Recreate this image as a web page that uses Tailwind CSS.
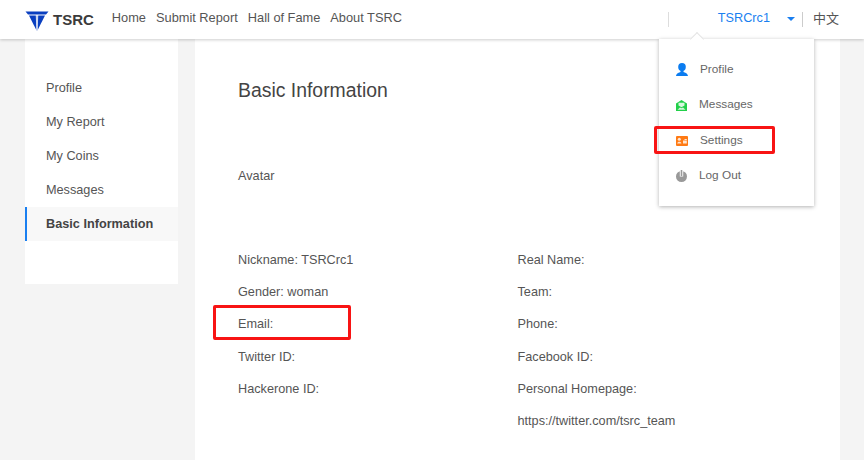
<!DOCTYPE html>
<html lang="en">
<head>
  <meta charset="UTF-8" />
  <title>TSRC</title>
  <script src="https://cdn.jsdelivr.net/npm/@tailwindcss/browser@4"></script>
</head>
<body class="relative h-[460px] w-[864px] overflow-hidden bg-[#f4f4f4] font-['Liberation_Sans','Noto_Sans_CJK_SC',sans-serif] text-[12.7px] text-[#555]">
  <!-- Header -->
  <header class="relative z-10 flex h-[39px] bg-white pl-[25px] pr-[25px] shadow-[0_1px_3px_rgba(0,0,0,0.2)]">
    <div class="flex items-center pt-[2px]">
      <svg width="24" height="20" viewBox="0 0 24 20">
        <path d="M0.5 0.5H23.5L21 3.5H3Z" fill="#0a3fc0" />
        <path d="M4 4.5H10.8L11.3 19Z" fill="#0a3fc0" />
        <path d="M20 4.5H13.2L12.7 19Z" fill="#0a3fc0" />
        <path d="M11.5 4.5H12.5L12.3 20H11.7Z" fill="#8fa6e0" />
      </svg>
      <span class="ml-[4px] text-[15px] font-bold text-[#3b3b3b]">TSRC</span>
    </div>
    <nav class="ml-[18px] flex gap-[10px] pt-[10px] text-[12.8px] leading-[15px] text-[#555]">
      <a href="#">Home</a>
      <a href="#">Submit Report</a>
      <a href="#">Hall of Fame</a>
      <a href="#">About TSRC</a>
    </nav>
    <div class="ml-auto flex items-center self-start pt-[10px] leading-[15px]">
      <span class="mt-[2px] h-[15px] w-px bg-[#ddd]"></span>
      <span class="ml-[49px] text-[#1a7ff0]">TSRCrc1</span>
      <span class="ml-[17px] h-0 w-0 border-x-[4px] border-t-[4px] border-x-transparent border-t-[#1a7ff0]"></span>
      <span class="ml-[7px] mt-[2px] h-[15px] w-px bg-[#ccc]"></span>
      <span class="ml-[10px] mt-[-1px] text-[13px]">中文</span>
    </div>
  </header>

  <div class="flex items-start gap-[17px] pl-[25px] pr-[24px]">
    <!-- Sidebar -->
    <aside class="flex h-[245px] w-[153px] flex-col bg-white pt-[32px]">
      <a href="#" class="flex h-[34px] items-center pl-[21px] pt-[2px]">Profile</a>
      <a href="#" class="flex h-[34px] items-center pl-[21px] pt-[2px]">My Report</a>
      <a href="#" class="flex h-[34px] items-center pl-[21px] pt-[2px]">My Coins</a>
      <a href="#" class="flex h-[34px] items-center pl-[21px] pt-[2px]">Messages</a>
      <a href="#" class="flex h-[34px] items-center border-l-2 border-[#1a7ff0] bg-[#f8f8f8] pl-[19px] pt-[2px] font-bold text-[#444]">Basic Information</a>
    </aside>

    <!-- Main -->
    <main class="h-[421px] w-[645px] bg-white pl-[43px] pt-[39px]">
      <h1 class="text-[19.4px] leading-[24px] text-[#444]">Basic Information</h1>
      <p class="mt-[66px] leading-[16px]">Avatar</p>
      <div class="mt-[60px] grid grid-cols-[279.5px_1fr] auto-rows-[32.3px] items-center">
        <p>Nickname: TSRCrc1</p>
        <p>Real Name:</p>
        <p>Gender: woman</p>
        <p>Team:</p>
        <p>Email:</p>
        <p>Phone:</p>
        <p>Twitter ID:</p>
        <p>Facebook ID:</p>
        <p>Hackerone ID:</p>
        <p>Personal Homepage:</p>
        <p></p>
        <p>https://twitter.com/tsrc_team</p>
      </div>
    </main>
  </div>

  <!-- User menu -->
  <div class="absolute left-[659px] top-[39px] z-20 h-[167px] w-[155px] bg-white pt-[13px] shadow-[0_1px_4px_rgba(0,0,0,0.3)]">
    <span class="absolute left-[33px] top-[-5px] h-[10px] w-[10px] rotate-45 border-l border-t border-[#e4e4e4] bg-white"></span>
    <a href="#" class="relative flex h-[35.5px] items-center pl-[17px] pt-[1px] text-[11.8px] text-[#666]">
      <svg width="12" height="13" viewBox="0 0 12 13" class="mt-[-2px]"><ellipse cx="6" cy="4" rx="3.8" ry="4" fill="#0b7cf0" /><path d="M4.5 7H7.5V9C9 9.7 11.5 10 12 13H0C0.5 10 3 9.7 4.5 9Z" fill="#0b7cf0" /></svg>
      <span class="ml-[12px]">Profile</span>
    </a>
    <a href="#" class="flex h-[35.5px] items-center pl-[17px] text-[11.8px] text-[#666]">
      <svg width="11" height="11" viewBox="0 0 11 11"><path d="M0 3.5L5.5 0L11 3.5V11H0Z" fill="#22d04a" /><path d="M2.5 2.8H8.5V5.5L5.5 7.2L2.5 5.5Z" fill="#d8f7df" /><path d="M1.5 9.8L4 7.5L5.5 8.2L7 7.5L9.5 9.8Z" fill="#d8f7df" /></svg>
      <span class="ml-[12px]">Messages</span>
    </a>
    <a href="#" class="flex h-[35.5px] items-center pl-[17px] pt-[1px] text-[11.8px] text-[#666]">
      <svg width="12" height="10" viewBox="0 0 12 10"><rect width="12" height="10" rx="1" fill="#ff7a14" /><circle cx="3.3" cy="3.3" r="1.5" fill="#ffe6d2" /><path d="M1.2 7.5C1.4 5.3 5.2 5.3 5.4 7.5Z" fill="#ffe6d2" /><rect x="7" y="4.5" width="3.8" height="3" fill="#ffe6d2" /><rect x="8.5" y="3" width="2.3" height="1" fill="#ffe6d2" /></svg>
      <span class="ml-[12px]">Settings</span>
    </a>
    <a href="#" class="flex h-[35.5px] items-center pl-[17px] text-[11.8px] text-[#666]">
      <svg width="11" height="12" viewBox="0 0 11 12"><circle cx="5.5" cy="6.5" r="5.5" fill="#999" /><rect x="3.8" y="0" width="3.4" height="6.5" fill="#fff" /><rect x="4.7" y="0" width="1.6" height="6" fill="#999" /></svg>
      <span class="ml-[12px]">Log Out</span>
    </a>
  </div>

  <!-- Red annotations -->
  <div class="absolute left-[654px] top-[126px] z-30 h-[28px] w-[121px] rounded-[2px] border-[3px] border-[#f81414]"></div>
  <div class="absolute left-[213px] top-[305px] z-30 h-[35px] w-[138px] rounded-[2px] border-[3px] border-[#f81414]"></div>
</body>
</html>
